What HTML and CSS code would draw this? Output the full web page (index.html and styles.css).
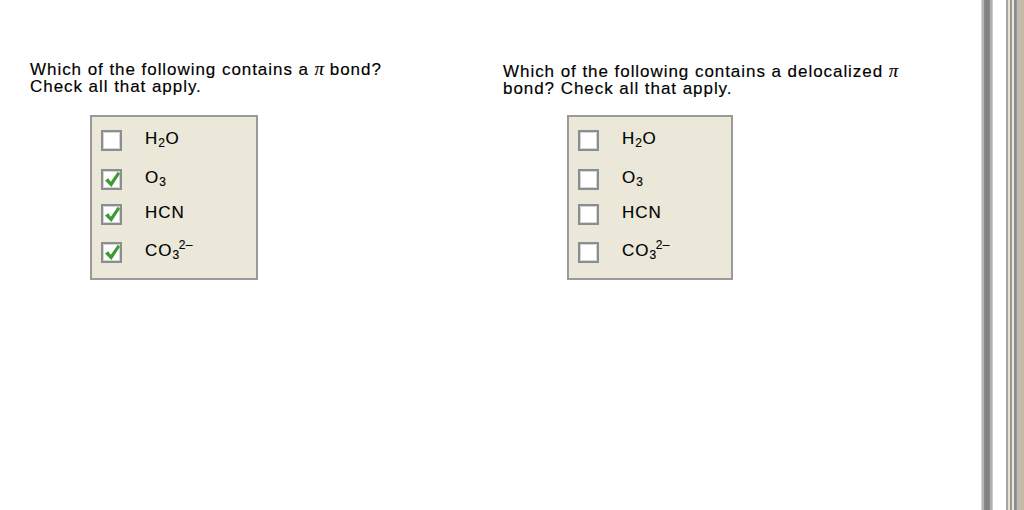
FILE: index.html
```html
<!DOCTYPE html>
<html>
<head>
<meta charset="utf-8">
<link rel="stylesheet" href="styles.css">
</head>
<body>
<div class="page">
  <main class="main">
    <section class="question">
      <p class="prompt">Which of the following contains a <i class="pi">π</i> bond?<br>Check all that apply.</p>
      <div class="choices choices-left">
        <div class="row row-1"><span class="box"></span><span class="label">H<sub>2</sub>O</span></div>
        <div class="row row-2"><span class="box"><svg class="check" viewBox="0 0 17 17"><path d="M2 9.6 L5.2 7.3 L7.8 10.7 L14.8 0.8 L17 2.8 L8.4 16 Z" fill="#3d9a35"/></svg></span><span class="label">O<sub>3</sub></span></div>
        <div class="row row-3"><span class="box"><svg class="check" viewBox="0 0 17 17"><path d="M2 9.6 L5.2 7.3 L7.8 10.7 L14.8 0.8 L17 2.8 L8.4 16 Z" fill="#3d9a35"/></svg></span><span class="label">HCN</span></div>
        <div class="row row-4"><span class="box"><svg class="check" viewBox="0 0 17 17"><path d="M2 9.6 L5.2 7.3 L7.8 10.7 L14.8 0.8 L17 2.8 L8.4 16 Z" fill="#3d9a35"/></svg></span><span class="label">CO<sub>3</sub><sup>2–</sup></span></div>
      </div>
    </section>
    <section class="question question-right">
      <p class="prompt">Which of the following contains a delocalized <i class="pi">π</i><br>bond? Check all that apply.</p>
      <div class="choices choices-right">
        <div class="row row-1"><span class="box"></span><span class="label">H<sub>2</sub>O</span></div>
        <div class="row row-2"><span class="box"></span><span class="label">O<sub>3</sub></span></div>
        <div class="row row-3"><span class="box"></span><span class="label">HCN</span></div>
        <div class="row row-4"><span class="box"></span><span class="label">CO<sub>3</sub><sup>2–</sup></span></div>
      </div>
    </section>
  </main>
  <div class="edge"></div>
</div>
</body>
</html>
```

FILE: styles.css
```css
html, body {
  margin: 0;
  padding: 0;
  background: #fff;
}
body {
  font-family: "Liberation Sans", Arial, sans-serif;
  color: #000;
  -webkit-text-stroke: 0.15px #000;
}
.page {
  display: flex;
  width: 1024px;
  height: 510px;
  overflow: hidden;
}
.main {
  flex: 1;
  display: grid;
  grid-template-columns: 473px 1fr;
  align-items: start;
  padding: 60px 0 0 30px;
}
.question-right {
  padding-top: 2px;
}
.prompt {
  margin: 0;
  font-size: 17px;
  line-height: 17px;
  letter-spacing: 0.95px;
  white-space: nowrap;
}
.pi {
  font-family: "Liberation Serif", "Times New Roman", serif;
  font-style: italic;
  font-size: 19px;
  letter-spacing: 0;
}
.choices {
  margin-top: 20px;
  background: #ebe8da;
  border: 2px solid #9a9b98;
  padding: 13px 9px 15px 9px;
  box-sizing: border-box;
}
.choices-left {
  margin-left: 60px;
  width: 168px;
}
.choices-right {
  margin-top: 18px;
  margin-left: 64px;
  width: 166px;
}
.row {
  display: flex;
  align-items: flex-start;
}
.row-1 { height: 39px; }
.row-2 { height: 35px; }
.row-3 { height: 38px; }
.row-4 { height: 21px; }
.box {
  width: 21px;
  height: 21px;
  box-sizing: border-box;
  border: 2px solid #8a8e8e;
  box-shadow: inset 0 0 0 1px #d4d6d6;
  background: #fff;
  flex: none;
  display: block;
  overflow: visible;
}
.check {
  display: block;
  width: 17px;
  height: 17px;
  overflow: visible;
}
.label {
  margin-left: 23px;
  margin-top: 1px;
  font-size: 17px;
  line-height: 16px;
  letter-spacing: 1px;
  white-space: nowrap;
}
.label sub, .label sup {
  font-size: 12px;
  line-height: 0;
  position: relative;
  vertical-align: baseline;
  letter-spacing: 0.5px;
}
.label sub {
  top: 3px;
}
.label sup {
  top: -7px;
  margin-left: -1px;
}
.edge {
  width: 43px;
  flex: none;
  background: linear-gradient(to right,
    #d4d4d4 0, #d4d4d4 1px,
    #b4b4b4 1px, #b4b4b4 3px,
    #8a8a8a 3px, #7e7e7e 6px, #8a8a8a 9px,
    #b0b0b0 9px, #b0b0b0 11px,
    #c8ccd0 11px, #c8ccd0 12px,
    #ffffff 12px, #ffffff 25px,
    #a4a4a4 25px, #a4a4a4 27px,
    #e6e2cc 27px, #e6e2cc 29px,
    #949a94 29px, #949a94 31px,
    #ecead8 31px, #ecead8 33px,
    #8c8c8c 33px, #8c8c8c 35px,
    #8898b8 35px, #8898b8 36px,
    #c4baa8 36px, #c4baa8 43px);
}
```
